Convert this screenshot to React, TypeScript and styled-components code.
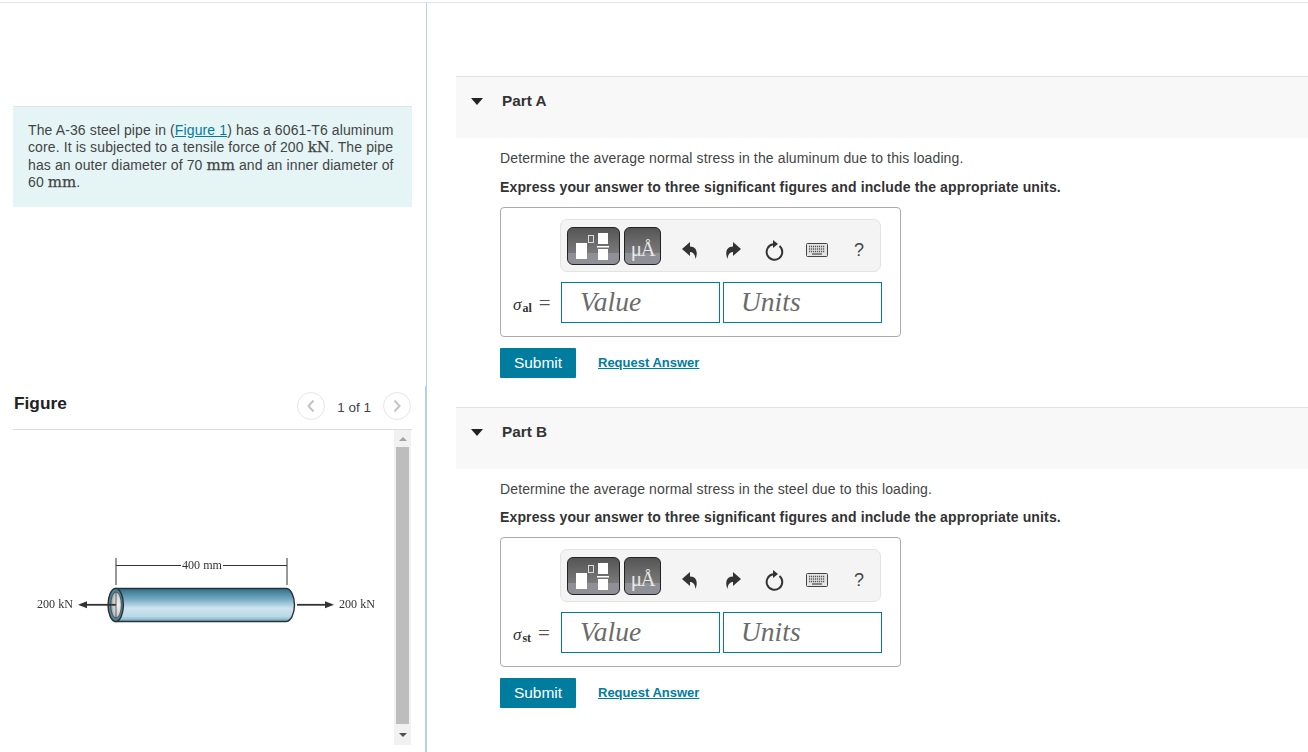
import React from "react";
import styled, { createGlobalStyle } from "styled-components";

const Global = createGlobalStyle`
  html, body { margin: 0; padding: 0; background: #fff; height: 100%; overflow: hidden; }
  body { font-family: "Liberation Sans", Arial, sans-serif; color: #333; font-size: 14px; }
`;

const Page = styled.div`
  width: 1308px;
  height: 752px;
  box-sizing: border-box;
  padding-top: 2px;
  display: flex;
  overflow: hidden;
`;
const TopRule = styled.div`
  position: absolute;
  left: 0;
  top: 2px;
  width: 1308px;
  height: 1px;
  background: #e3e3e3;
`;
const LeftPane = styled.div`
  width: 427px;
  height: 750px;
  box-sizing: border-box;
  border-right: 1px solid #b9cfe2;
  display: flex;
  flex-direction: column;
`;
const IntroBlock = styled.div`
  height: 384px;
  box-sizing: border-box;
  padding: 104px 0 0 13px;
`;
const FigureBlock = styled.div`
  flex: 1;
  min-height: 0;
  box-sizing: border-box;
  border-right: 1px solid #b9cfe2;
  padding-left: 13px;
`;
const Intro = styled.div`
  width: 399px;
  height: 101px;
  box-sizing: border-box;
  border-top: 1px solid #dfe5e6;
  background: #e5f5f6;
  padding: 15px 10px 0 15px;
  font-size: 14px;
  line-height: 17.3px;
  letter-spacing: 0.12px;
  color: #444;
`;
const Unit = styled.span`
  font-family: "DejaVu Serif", serif;
  font-size: 15px;
  line-height: 0;
  letter-spacing: 0;
  -webkit-text-stroke: 0.25px #444;
`;
const TextLink = styled.a`
  color: #007c9e;
  text-decoration: underline;
`;
const FigureHead = styled.div`
  height: 43px;
  margin-top: 1px;
  width: 399px;
  box-sizing: border-box;
  border-bottom: 1px solid #dcdcdc;
  display: flex;
  align-items: flex-start;
  justify-content: space-between;
  padding-top: 5px;
`;
const FigureTitle = styled.div`
  font-size: 17.3px;
  font-weight: 700;
  color: #222;
  margin-left: 1px;
  line-height: 22px;
`;
const Pager = styled.div`
  display: flex;
  align-items: center;
  gap: 12px;
  font-size: 13.5px;
  color: #444;
  margin-right: 1px;
`;
const PagerLabel = styled.span`
  margin-top: 2px;
`;
const PagerButton = styled.div`
  width: 28px;
  height: 28px;
  box-sizing: border-box;
  border: 1px solid #e6e6e6;
  border-radius: 50%;
  display: flex;
  align-items: center;
  justify-content: center;
`;
const FigureBody = styled.div`
  width: 398px;
  height: 315px;
  display: flex;
`;
const FigureCanvas = styled.div`
  width: 381px;
  height: 100%;
`;
const Scrollbar = styled.div`
  width: 17px;
  height: 315px;
  background: #f1f1f1;
  display: flex;
  flex-direction: column;
  align-items: center;
`;
const ScrollArrow = styled.div<{ $up?: boolean }>`
  height: ${(p) => (p.$up ? 17 : 21)}px;
  flex: none;
  display: flex;
  align-items: center;
  justify-content: center;
  &::before {
    content: "";
    border-left: 4px solid transparent;
    border-right: 4px solid transparent;
    ${(p) => (p.$up ? "border-bottom: 4px solid #a3a3a3;" : "border-top: 4px solid #505050;")}
  }
`;
const ScrollThumb = styled.div`
  flex: 1;
  width: 13px;
  background: #bdbdbd;
`;
const RightPane = styled.div`
  flex: 1;
  padding: 74px 0 0 29px;
  min-width: 0;
`;
const PartSection = styled.section`
  height: 331px;
`;
const PartHeader = styled.div`
  height: 62px;
  box-sizing: border-box;
  border-top: 1px solid #e3e3e3;
  background: #f8f8f8;
  display: flex;
  align-items: center;
  padding: 0 0 13px 15px;
`;
const Caret = styled.div`
  width: 0;
  height: 0;
  border-left: 6.5px solid transparent;
  border-right: 6.5px solid transparent;
  border-top: 7px solid #222;
  margin-right: 19px;
`;
const PartTitle = styled.div`
  font-size: 15.3px;
  font-weight: 700;
  color: #333;
`;
const PartBody = styled.div`
  padding: 12px 0 0 44px;
`;
const Question = styled.div`
  font-size: 14px;
  line-height: 17px;
  letter-spacing: 0.125px;
  color: #444;
`;
const Instruction = styled.div<{ $gap: number }>`
  font-size: 14px;
  line-height: 17px;
  letter-spacing: 0.14px;
  font-weight: 700;
  color: #333;
  margin-top: ${(p) => p.$gap}px;
`;
const AnswerBox = styled.div`
  width: 401px;
  height: 130px;
  box-sizing: border-box;
  border: 1px solid #ababab;
  border-radius: 4px;
  margin-top: 11px;
  padding: 11px 0 0 59px;
`;
const Toolbar = styled.div`
  width: 321px;
  height: 53px;
  box-sizing: border-box;
  border: 1px solid #e3e3e3;
  border-radius: 7px;
  background: #f4f4f4;
  display: flex;
  align-items: center;
  padding: 0 0 0 6px;
`;
const TemplateButton = styled.div<{ $w: number }>`
  width: ${(p) => p.$w}px;
  height: 38px;
  flex: none;
  box-sizing: border-box;
  border: 1px solid #222;
  border-radius: 6px;
  margin-right: 4px;
  background: linear-gradient(#555 0, #7a7a7a 70%, #8f8f97 70%, #8f8f97 100%);
  display: flex;
  align-items: center;
  justify-content: center;
`;
const MuText = styled.span`
  font-family: "Liberation Serif", serif;
  font-size: 21px;
  letter-spacing: -1.5px;
  color: #e8e8e8;
  margin-top: 7px;
`;
const ToolIcon = styled.div<{ $ml: number }>`
  margin-left: ${(p) => p.$ml}px;
  margin-top: 9px;
  display: flex;
  align-items: center;
  justify-content: center;
  color: #333;
`;
const HelpMark = styled.span`
  font-size: 18px;
  color: #444;
  margin: 9px 0 0 26px;
`;
const InputRow = styled.div`
  display: flex;
  align-items: center;
  margin: 10px 0 0 -48px;
`;
const Symbol = styled.div`
  width: 49px;
  padding-left: 1px;
  box-sizing: border-box;
  font-family: "Liberation Serif", serif;
  color: #333;
  white-space: nowrap;
  margin-top: 2px;
`;
const Sigma = styled.i`
  font-size: 17px;
`;
const Sub = styled.span`
  font-size: 12px;
  font-weight: 700;
  vertical-align: -2px;
  margin: 0 7px 0 1px;
`;
const Equals = styled.span`
  font-size: 21px;
  color: #555;
`;
const EntryField = styled.div<{ $ml?: number; $pl: number }>`
  width: 159px;
  height: 41px;
  box-sizing: border-box;
  border: 1px solid #007c9e;
  margin-left: ${(p) => p.$ml ?? 0}px;
  padding-left: ${(p) => p.$pl}px;
  font-family: "Liberation Serif", serif;
  font-style: italic;
  font-size: 27.5px;
  line-height: 38px;
  color: #6b6b6b;
`;
const Actions = styled.div`
  display: flex;
  align-items: center;
  margin-top: 11px;
  gap: 22px;
`;
const SubmitButton = styled.button`
  width: 76px;
  height: 30px;
  border: none;
  border-radius: 1px;
  background: #007c9e;
  color: #fff;
  font: 15.5px "Liberation Sans", Arial, sans-serif;
  padding: 0;
`;
const RequestLink = styled.a`
  color: #007c9e;
  font-size: 13px;
  font-weight: 700;
  text-decoration: underline;
  margin-bottom: 2px;
`;

const Chevron = ({ dir }: { dir: "l" | "r" }) => (
  <svg width="10" height="14" viewBox="0 0 10 14">
    <path d={dir === "l" ? "M7.5 1.5 2.5 7l5 5.5" : "M2.5 1.5 7.5 7l-5 5.5"} fill="none" stroke="#c4c4c4" strokeWidth="2" />
  </svg>
);

const PipeFigure = () => (
  <svg width="381" height="315" viewBox="0 0 381 315" style={{ display: "block", filter: "blur(0.35px)" }}>
    <defs>
      <linearGradient id="pipe" x1="0" y1="0" x2="0" y2="1">
        <stop offset="0" stopColor="#2f7088" />
        <stop offset="0.3" stopColor="#6fa6bf" />
        <stop offset="0.6" stopColor="#cfe4ee" />
        <stop offset="0.85" stopColor="#b9d8e6" />
        <stop offset="1" stopColor="#6fa2b8" />
      </linearGradient>
      <radialGradient id="core" cx="0.7" cy="0.5" r="0.8">
        <stop offset="0" stopColor="#f4f4f4" />
        <stop offset="0.6" stopColor="#c4c8c8" />
        <stop offset="1" stopColor="#70787a" />
      </radialGradient>
    </defs>
    <g transform="translate(-13 -430)" fontFamily="Liberation Serif, serif" fontSize="12" fill="#333">
      <path d="M116 558v27M287 558v27" stroke="#333" strokeWidth="1" fill="none" />
      <path d="M116 565.500h65M223 565.500h64" stroke="#333" strokeWidth="1" fill="none" />
      <text x="182" y="569" textLength="40" lengthAdjust="spacingAndGlyphs">400 mm</text>
      <text x="37" y="608" textLength="36" lengthAdjust="spacingAndGlyphs">200 kN</text>
      <text x="339" y="608" textLength="36" lengthAdjust="spacingAndGlyphs">200 kN</text>
      <path d="M116 588.500h170a8.500 16.500 0 0 1 0 33h-170z" fill="url(#pipe)" stroke="#27333a" strokeWidth="1.400" />
      <ellipse cx="115.700" cy="605" rx="7.700" ry="16.500" fill="#4f8298" stroke="#27333a" strokeWidth="1.400" />
      <ellipse cx="116" cy="605" rx="5.300" ry="13" fill="url(#core)" stroke="#444" strokeWidth="0.800" />
      <path d="M86 604.800h30" stroke="#333" strokeWidth="1.800" />
      <path d="M116 592v26" stroke="#444" strokeWidth="0.800" />
      <path d="M78 604.800l9-3.500v7z" fill="#333" />
      <path d="M297 604.800h30" stroke="#333" strokeWidth="1.800" />
      <path d="M334 604.800l-9-3.500v7z" fill="#333" />
    </g>
  </svg>
);

const TemplateGlyph = () => (
  <svg width="51" height="36" viewBox="0 0 51 36">
    <rect x="8" y="15" width="11" height="16" fill="#fff" />
    <rect x="20.500" y="7.500" width="5" height="7" fill="none" stroke="#ddd" strokeWidth="1" />
    <rect x="30" y="5" width="10" height="11" fill="#fff" />
    <rect x="29" y="18" width="12" height="1.500" fill="#fff" />
    <rect x="30" y="21" width="10" height="11" fill="#fff" />
  </svg>
);

const Undo = ({ flip }: { flip?: boolean }) => (
  <svg width="16" height="17" viewBox="0 0 16 17" style={flip ? { transform: "scaleX(-1)" } : undefined}>
    <path d="M8 0 0 7l8 7v-4c3 0 5 2 5.500 7C16 11 15 4.500 8 4.500z" fill="#333" />
  </svg>
);

const Refresh = () => (
  <svg width="19" height="21" viewBox="0 0 19 21">
    <path d="M14.500 6A7.800 7.800 0 1 1 8 4.300" fill="none" stroke="#333" strokeWidth="2" />
    <path d="M8 0 13 4 8 8z" fill="#333" />
  </svg>
);

const Keyboard = () => (
  <svg width="22" height="14" viewBox="0 0 22 14">
    <rect x="0.500" y="0.500" width="21" height="13" rx="1" fill="#e4e4e4" stroke="#444" />
    <path d="M3 3.500h16M3 6h16" stroke="#555" strokeWidth="1.300" strokeDasharray="1.200 0.800" />
    <path d="M3 8.500h16" stroke="#555" strokeWidth="1.300" strokeDasharray="1.200 0.800" />
    <path d="M6 11h10" stroke="#555" strokeWidth="1.300" />
  </svg>
);

const Part = ({ title, question, sub, gap }: { title: string; question: string; sub: string; gap: number }) => (
  <PartSection>
    <PartHeader>
      <Caret />
      <PartTitle>{title}</PartTitle>
    </PartHeader>
    <PartBody>
      <Question>{question}</Question>
      <Instruction $gap={gap}>Express your answer to three significant figures and include the appropriate units.</Instruction>
      <AnswerBox>
        <Toolbar>
          <TemplateButton $w={53}>
            <TemplateGlyph />
          </TemplateButton>
          <TemplateButton $w={37}>
            <MuText>μÅ</MuText>
          </TemplateButton>
          <ToolIcon $ml={17}><Undo /></ToolIcon>
          <ToolIcon $ml={27}><Undo flip /></ToolIcon>
          <ToolIcon $ml={24}><Refresh /></ToolIcon>
          <ToolIcon $ml={22}><Keyboard /></ToolIcon>
          <HelpMark>?</HelpMark>
        </Toolbar>
        <InputRow>
          <Symbol>
            <Sigma>σ</Sigma>
            <Sub>{sub}</Sub>
            <Equals>=</Equals>
          </Symbol>
          <EntryField $pl={18}>Value</EntryField>
          <EntryField $ml={3} $pl={17}>Units</EntryField>
        </InputRow>
      </AnswerBox>
      <Actions>
        <SubmitButton>Submit</SubmitButton>
        <RequestLink>Request Answer</RequestLink>
      </Actions>
    </PartBody>
  </PartSection>
);

export default function App() {
  return (
    <Page>
      <Global />
      <TopRule />
      <LeftPane>
        <IntroBlock>
          <Intro>
            The A-36 steel pipe in (<TextLink>Figure 1</TextLink>) has a 6061-T6 aluminum core. It is subjected to a tensile
            force of 200 <Unit>kN</Unit>. The pipe has an outer diameter of 70 <Unit>mm</Unit> and an inner diameter of 60{" "}
            <Unit>mm</Unit>.
          </Intro>
        </IntroBlock>
        <FigureBlock>
          <FigureHead>
            <FigureTitle>Figure</FigureTitle>
            <Pager>
              <PagerButton><Chevron dir="l" /></PagerButton>
              <PagerLabel>1 of 1</PagerLabel>
              <PagerButton><Chevron dir="r" /></PagerButton>
            </Pager>
          </FigureHead>
          <FigureBody>
            <FigureCanvas><PipeFigure /></FigureCanvas>
            <Scrollbar>
              <ScrollArrow $up />
              <ScrollThumb />
              <ScrollArrow />
            </Scrollbar>
          </FigureBody>
        </FigureBlock>
      </LeftPane>
      <RightPane>
        <Part title="Part A" gap={12} question="Determine the average normal stress in the aluminum due to this loading." sub="al" />
        <Part title="Part B" gap={11} question="Determine the average normal stress in the steel due to this loading." sub="st" />
      </RightPane>
    </Page>
  );
}
